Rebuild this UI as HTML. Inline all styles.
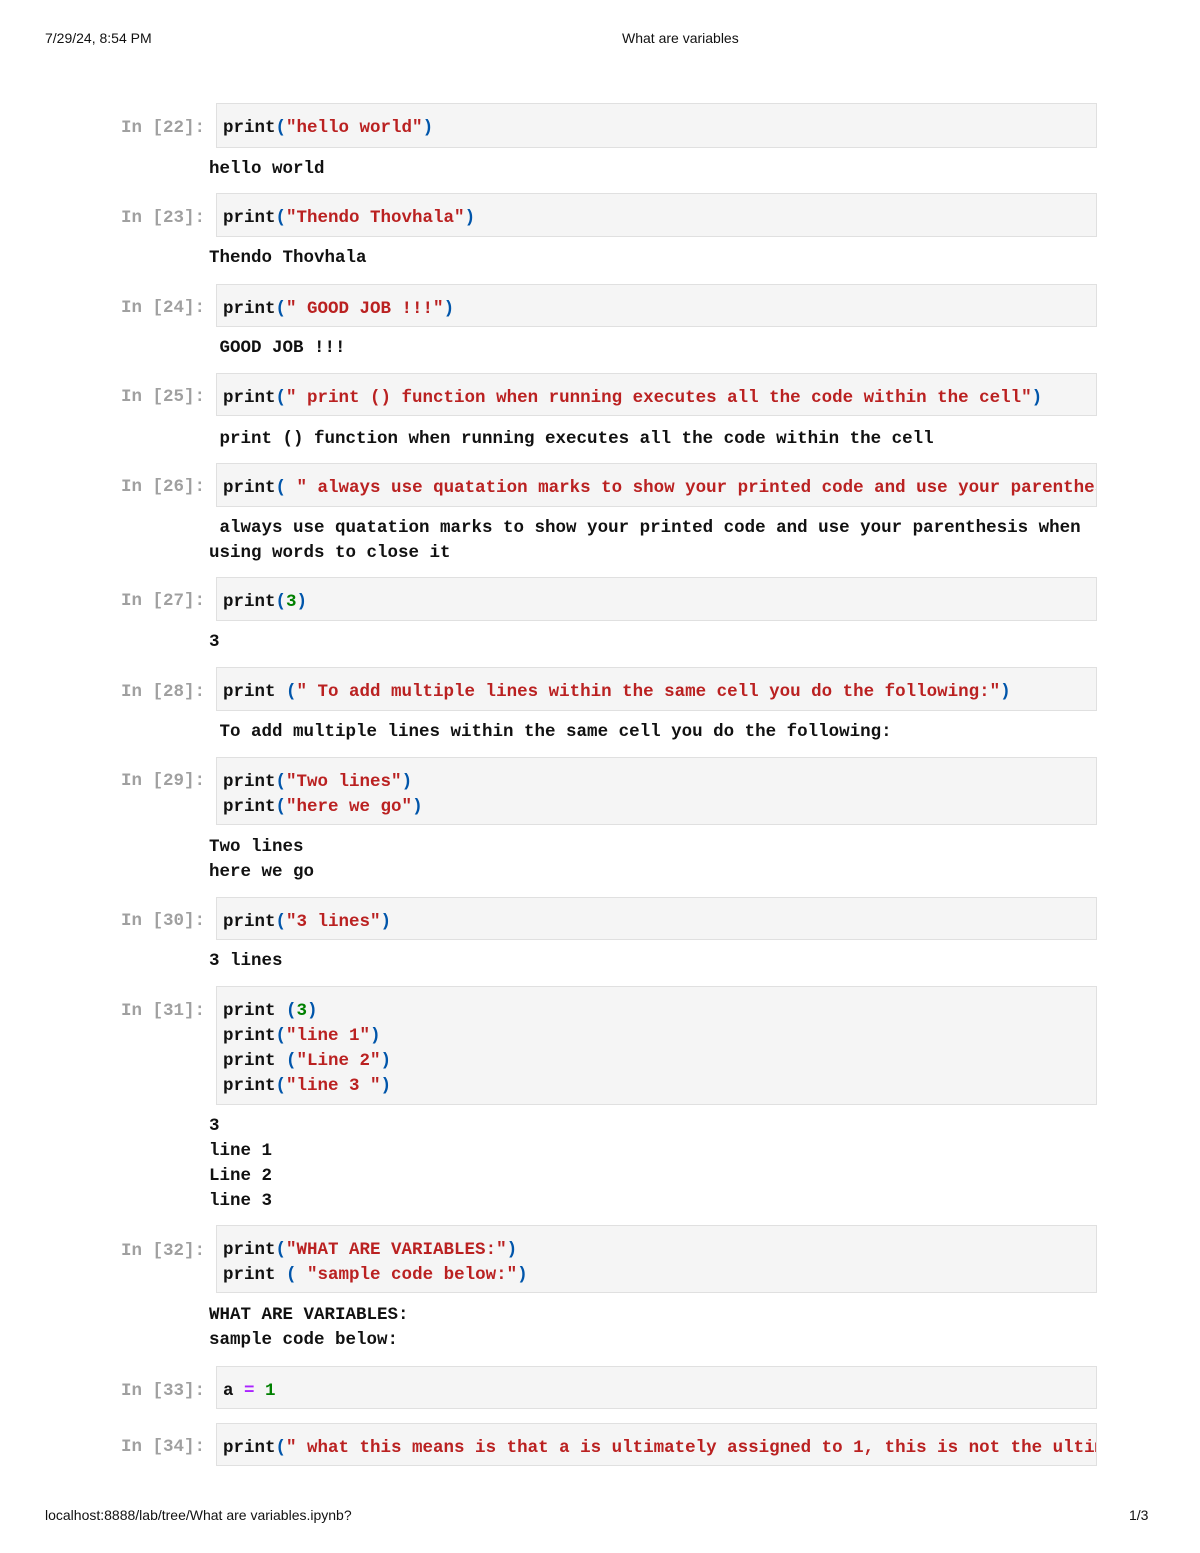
<!DOCTYPE html>
<html><head><meta charset="utf-8"><style>
body{margin:0;width:1200px;height:1553px;position:relative;background:#fff;overflow:hidden}
.hd{position:absolute;font-family:"Liberation Sans",sans-serif;font-size:14px;color:#111;line-height:16px}
.p{position:absolute;right:995px;font-family:"Liberation Mono",monospace;font-size:17.5px;font-weight:bold;color:#a0a0a0;line-height:25px;white-space:pre;margin-top:3px}
.b{position:absolute;left:216px;width:881px;background:#f5f5f5;border:1px solid #e0e0e0;box-sizing:border-box;padding:12px 0 0 6px;overflow:hidden}
.c,.o{font-family:"Liberation Mono",monospace;font-size:17.5px;font-weight:bold;line-height:25px;white-space:pre;color:#111}
.o{position:absolute;left:209px;margin-top:3px}
.s{color:#ba2121}.q{color:#0055aa}.n{color:#008000}.e{color:#aa22ff}
</style></head><body>
<div class="hd" style="left:45px;top:30px">7/29/24, 8:54 PM</div>
<div class="hd" style="left:622px;top:30px">What are variables</div>
<div class="hd" style="left:45px;top:1507px">localhost:8888/lab/tree/What are variables.ipynb?</div>
<div class="hd" style="left:1129px;top:1507px">1/3</div>

<div class="p" style="top:113px">In [22]:</div>
<div class="b" style="top:103px;height:45px"><div class="c">print<span class="q">(</span><span class="s">"hello world"</span><span class="q">)</span></div></div>
<div class="o" style="top:154px">hello world</div>

<div class="p" style="top:203px">In [23]:</div>
<div class="b" style="top:193px;height:44px"><div class="c">print<span class="q">(</span><span class="s">"Thendo Thovhala"</span><span class="q">)</span></div></div>
<div class="o" style="top:243px">Thendo Thovhala</div>

<div class="p" style="top:293px">In [24]:</div>
<div class="b" style="top:284px;height:43px"><div class="c">print<span class="q">(</span><span class="s">" GOOD JOB !!!"</span><span class="q">)</span></div></div>
<div class="o" style="top:333px"> GOOD JOB !!!</div>

<div class="p" style="top:382px">In [25]:</div>
<div class="b" style="top:373px;height:43px"><div class="c">print<span class="q">(</span><span class="s">" print () function when running executes all the code within the cell"</span><span class="q">)</span></div></div>
<div class="o" style="top:424px"> print () function when running executes all the code within the cell</div>

<div class="p" style="top:472px">In [26]:</div>
<div class="b" style="top:463px;height:44px"><div class="c">print<span class="q">(</span> <span class="s">" always use quatation marks to show your printed code and use your parenthesis when using words to close it"</span><span class="q">)</span></div></div>
<div class="o" style="top:513px"> always use quatation marks to show your printed code and use your parenthesis when
using words to close it</div>

<div class="p" style="top:586px">In [27]:</div>
<div class="b" style="top:577px;height:44px"><div class="c">print<span class="q">(</span><span class="n">3</span><span class="q">)</span></div></div>
<div class="o" style="top:627px">3</div>

<div class="p" style="top:677px">In [28]:</div>
<div class="b" style="top:667px;height:44px"><div class="c">print <span class="q">(</span><span class="s">" To add multiple lines within the same cell you do the following:"</span><span class="q">)</span></div></div>
<div class="o" style="top:717px"> To add multiple lines within the same cell you do the following:</div>

<div class="p" style="top:766px">In [29]:</div>
<div class="b" style="top:757px;height:68px"><div class="c">print<span class="q">(</span><span class="s">"Two lines"</span><span class="q">)</span>
print<span class="q">(</span><span class="s">"here we go"</span><span class="q">)</span></div></div>
<div class="o" style="top:832px">Two lines
here we go</div>

<div class="p" style="top:906px">In [30]:</div>
<div class="b" style="top:897px;height:43px"><div class="c">print<span class="q">(</span><span class="s">"3 lines"</span><span class="q">)</span></div></div>
<div class="o" style="top:946px">3 lines</div>

<div class="p" style="top:996px">In [31]:</div>
<div class="b" style="top:986px;height:119px"><div class="c">print <span class="q">(</span><span class="n">3</span><span class="q">)</span>
print<span class="q">(</span><span class="s">"line 1"</span><span class="q">)</span>
print <span class="q">(</span><span class="s">"Line 2"</span><span class="q">)</span>
print<span class="q">(</span><span class="s">"line 3 "</span><span class="q">)</span></div></div>
<div class="o" style="top:1111px">3
line 1
Line 2
line 3</div>

<div class="p" style="top:1236px">In [32]:</div>
<div class="b" style="top:1225px;height:68px"><div class="c">print<span class="q">(</span><span class="s">"WHAT ARE VARIABLES:"</span><span class="q">)</span>
print <span class="q">(</span> <span class="s">"sample code below:"</span><span class="q">)</span></div></div>
<div class="o" style="top:1300px">WHAT ARE VARIABLES:
sample code below:</div>

<div class="p" style="top:1376px">In [33]:</div>
<div class="b" style="top:1366px;height:43px"><div class="c">a <span class="e">=</span> <span class="n">1</span></div></div>

<div class="p" style="top:1432px">In [34]:</div>
<div class="b" style="top:1423px;height:43px"><div class="c">print<span class="q">(</span><span class="s">" what this means is that a is ultimately assigned to 1, this is not the ultimate value"</span><span class="q">)</span></div></div>
</body></html>
